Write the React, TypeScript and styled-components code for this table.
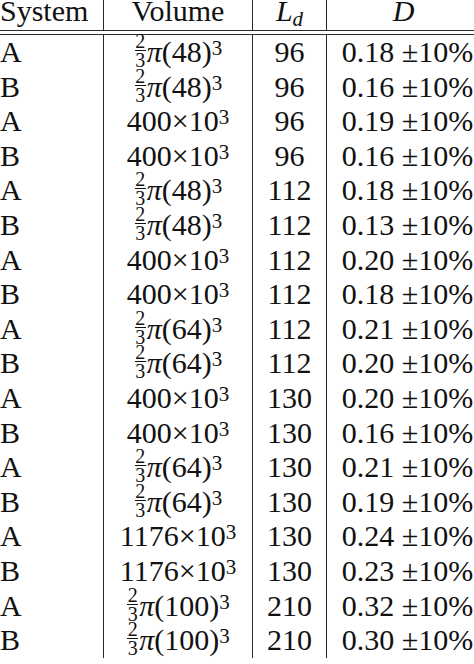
import React from "react";
import styled, { createGlobalStyle } from "styled-components";

const Global = createGlobalStyle`
  html, body { margin: 0; padding: 0; background: #ffffff; overflow: hidden; }
  *, *::before, *::after { box-sizing: border-box; }
`;

const Page = styled.div`
  width: 474px;
  height: 664px;
  overflow: hidden;
  background: #ffffff;
  color: #111111;
  font-family: "Liberation Serif", "Times New Roman", serif;
  font-size: 30px;
`;

const Table = styled.div`
  display: grid;
  grid-template-columns: 104px 149px 74px 161px;
  width: 488px;
`;

const Cell = styled.div<{ $align: "left" | "center"; $head?: boolean; $last?: boolean; $shift?: number }>`
  height: ${(p) => (p.$head ? "30px" : "34.6px")};
  line-height: ${(p) => (p.$head ? "21px" : "34.6px")};
  text-align: ${(p) => p.$align};
  white-space: nowrap;
  padding-right: ${(p) => (p.$shift ? `${p.$shift}px` : "0")};
  border-right: ${(p) => (p.$last ? "none" : "1px solid #2b2b2b")};
`;

const DoubleRule = styled.div`
  grid-column: 1 / -1;
  height: 5px;
  border-top: 1px solid #2b2b2b;
  border-bottom: 1px solid #2b2b2b;
`;

const MathVar = styled.span`
  font-style: italic;
`;

const Sub = styled.span`
  font-size: 21px;
  line-height: 0;
  vertical-align: -5px;
  font-style: italic;
`;

const Sup = styled.span`
  font-size: 21px;
  line-height: 0;
  vertical-align: 7px;
`;

const Frac = styled.span`
  display: inline-flex;
  flex-direction: column;
  align-items: center;
  font-size: 20px;
  line-height: 18px;
  vertical-align: 14px;
  margin: -6px 1px -6px 1px;
`;

const FracPart = styled.span<{ $top?: boolean }>`
  display: block;
  padding: 0 0.5px;
  border-bottom: ${(p) => (p.$top ? "1px solid #111111" : "none")};
`;

type Volume = { kind: "sphere"; r: number } | { kind: "cube"; n: number };
type Row = { sys: string; vol: Volume; ld: number; d: string };

const S = (r: number): Volume => ({ kind: "sphere", r });
const C = (n: number): Volume => ({ kind: "cube", n });

const rows: Row[] = [
  { sys: "A", vol: S(48), ld: 96, d: "0.18" },
  { sys: "B", vol: S(48), ld: 96, d: "0.16" },
  { sys: "A", vol: C(400), ld: 96, d: "0.19" },
  { sys: "B", vol: C(400), ld: 96, d: "0.16" },
  { sys: "A", vol: S(48), ld: 112, d: "0.18" },
  { sys: "B", vol: S(48), ld: 112, d: "0.13" },
  { sys: "A", vol: C(400), ld: 112, d: "0.20" },
  { sys: "B", vol: C(400), ld: 112, d: "0.18" },
  { sys: "A", vol: S(64), ld: 112, d: "0.21" },
  { sys: "B", vol: S(64), ld: 112, d: "0.20" },
  { sys: "A", vol: C(400), ld: 130, d: "0.20" },
  { sys: "B", vol: C(400), ld: 130, d: "0.16" },
  { sys: "A", vol: S(64), ld: 130, d: "0.21" },
  { sys: "B", vol: S(64), ld: 130, d: "0.19" },
  { sys: "A", vol: C(1176), ld: 130, d: "0.24" },
  { sys: "B", vol: C(1176), ld: 130, d: "0.23" },
  { sys: "A", vol: S(100), ld: 210, d: "0.32" },
  { sys: "B", vol: S(100), ld: 210, d: "0.30" },
];

function VolumeExpr({ vol }: { vol: Volume }) {
  if (vol.kind === "sphere") {
    return (
      <>
        <Frac>
          <FracPart $top>2</FracPart>
          <FracPart>3</FracPart>
        </Frac>
        <MathVar>π</MathVar>({vol.r})<Sup>3</Sup>
      </>
    );
  }
  return (
    <>
      {vol.n}×10<Sup>3</Sup>
    </>
  );
}

export default function App() {
  return (
    <Page>
      <Global />
      <Table>
        <Cell $head $align="left">System</Cell>
        <Cell $head $align="center">Volume</Cell>
        <Cell $head $align="center">
          <MathVar>L</MathVar>
          <Sub>d</Sub>
        </Cell>
        <Cell $head $last $align="center" $shift={8}>
          <MathVar>D</MathVar>
        </Cell>
        <DoubleRule />
        {rows.map((r, i) => (
          <React.Fragment key={i}>
            <Cell $align="left">{r.sys}</Cell>
            <Cell $align="center">
              <VolumeExpr vol={r.vol} />
            </Cell>
            <Cell $align="center">{r.ld}</Cell>
            <Cell $align="center" $last>
              {r.d} ±10%
            </Cell>
          </React.Fragment>
        ))}
      </Table>
    </Page>
  );
}
